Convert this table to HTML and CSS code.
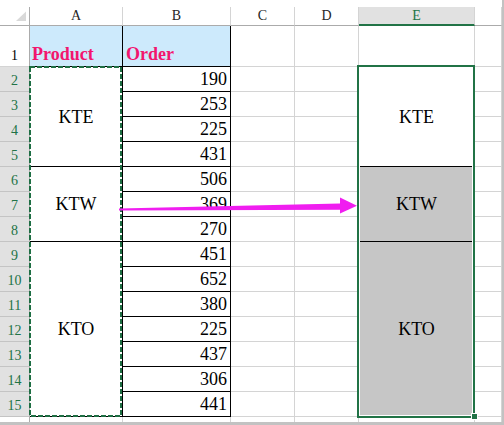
FILE: index.html
```html
<!DOCTYPE html>
<html>
<head>
<meta charset="utf-8">
<link rel="stylesheet" href="styles.css">
</head>
<body>
<div class="sheet">
  <div class="topgap"></div>
  <div class="vbar"></div>
  <div class="hbar"></div>

  <div class="corner"><svg class="corner-tri" width="29" height="18" viewBox="0 0 29 18"><polygon points="16,14 26,14 26,4.5" fill="#d9d9d9"/></svg></div>
  <div class="ch">A</div>
  <div class="ch">B</div>
  <div class="ch">C</div>
  <div class="ch">D</div>
  <div class="ch sel">E</div>
  <div class="ch"></div>

  <div class="rh plain">1</div>
  <div class="c title bk">Product</div>
  <div class="c title bk pad3">Order</div>
  <div class="c"></div><div class="c"></div><div class="c"></div><div class="c"></div>

  <div class="rh">2</div>
  <div class="c mid bk span4">KTE</div>
  <div class="c num bk">190</div>
  <div class="c"></div><div class="c"></div>
  <div class="c mid bkb span4">KTE</div>
  <div class="c"></div>

  <div class="rh">3</div>
  <div class="c num bk">253</div>
  <div class="c"></div><div class="c"></div><div class="c"></div>

  <div class="rh">4</div>
  <div class="c num bk">225</div>
  <div class="c"></div><div class="c"></div><div class="c"></div>

  <div class="rh">5</div>
  <div class="c num bk">431</div>
  <div class="c"></div><div class="c"></div><div class="c"></div>

  <div class="rh">6</div>
  <div class="c mid bk span3">KTW</div>
  <div class="c num bk">506</div>
  <div class="c"></div><div class="c"></div>
  <div class="c mid bkb hl span3">KTW</div>
  <div class="c"></div>

  <div class="rh">7</div>
  <div class="c num bk">369</div>
  <div class="c"></div><div class="c"></div><div class="c"></div>

  <div class="rh">8</div>
  <div class="c num bk">270</div>
  <div class="c"></div><div class="c"></div><div class="c"></div>

  <div class="rh">9</div>
  <div class="c mid bk span7">KTO</div>
  <div class="c num bk">451</div>
  <div class="c"></div><div class="c"></div>
  <div class="c mid hl span7">KTO</div>
  <div class="c"></div>

  <div class="rh">10</div>
  <div class="c num bk">652</div>
  <div class="c"></div><div class="c"></div><div class="c"></div>

  <div class="rh">11</div>
  <div class="c num bk">380</div>
  <div class="c"></div><div class="c"></div><div class="c"></div>

  <div class="rh">12</div>
  <div class="c num bk">225</div>
  <div class="c"></div><div class="c"></div><div class="c"></div>

  <div class="rh">13</div>
  <div class="c num bk">437</div>
  <div class="c"></div><div class="c"></div><div class="c"></div>

  <div class="rh">14</div>
  <div class="c num bk">306</div>
  <div class="c"></div><div class="c"></div><div class="c"></div>

  <div class="rh">15</div>
  <div class="c num bk">441</div>
  <div class="c"></div><div class="c"></div><div class="c"></div>

  <div class="rh plain last"></div>
  <div class="c last"></div><div class="c last"></div><div class="c last"></div><div class="c last"></div><div class="c last"></div><div class="c last"></div>

  <svg class="overlay" width="504" height="425" viewBox="0 0 504 425">
    <rect x="30" y="67" width="91" height="349" fill="none" stroke="#1e6e43" stroke-width="2" stroke-dasharray="5 2" shape-rendering="crispEdges"/>
    <polygon points="119,208.4 340,203.5 340,197.6 357,205.7 340,213.6 340,209.8 119,210.6" fill="#f01ef0"/>
  </svg>
  <div class="selbox"></div>
  <div class="handle"></div>
</div>
</body>
</html>
```
FILE: styles.css
```css
html, body {
  margin: 0;
  padding: 0;
  background: #fff;
}

.sheet {
  position: relative;
  width: 504px;
  height: 425px;
  overflow: hidden;
  display: grid;
  grid-template-columns: 30px 93px 108px 64px 64px 116px 27px 2px;
  grid-template-rows: 7px 19px 41px repeat(14, 25px) 5px 3px;
  font-family: "Liberation Serif", "DejaVu Serif", serif;
  background: #fff;
}

.sheet > div {
  box-sizing: border-box;
  min-width: 0;
  min-height: 0;
}

.topgap {
  grid-column: 1 / span 7;
  background: #fff;
}

.vbar {
  grid-column: 8;
  grid-row: 1 / 19;
  background: #c2c2c2;
}

.hbar {
  grid-column: 1 / -1;
  grid-row: 19;
  background: #c2c2c2;
}

.corner {
  border-right: 1px solid #ababab;
  border-bottom: 1px solid #ababab;
  background: #fff;
}

.corner-tri {
  display: block;
}

.ch {
  border-right: 1px solid #d4d4d4;
  border-bottom: 1px solid #ababab;
  background: #fff;
  color: #262626;
  font-family: "Liberation Serif", "DejaVu Serif", serif;
  font-size: 14px;
  line-height: 18px;
  text-align: center;
}

.ch.sel {
  background: #e1e1e1;
  color: #217346;
  border-bottom: 2px solid #217346;
  line-height: 17px;
}

.rh {
  display: flex;
  justify-content: center;
  align-items: flex-end;
  padding-bottom: 2px;
  background: #e1e1e1;
  color: #217346;
  font-family: "Liberation Serif", "DejaVu Serif", serif;
  font-size: 14px;
  line-height: 16px;
  border-right: 1px solid #ababab;
  border-bottom: 1px solid #c4c4c4;
  overflow: hidden;
}

.rh.plain {
  background: #fff;
  color: #000;
  border-bottom-color: #d4d4d4;
}

.c {
  display: flex;
  border-right: 1px solid #d4d4d4;
  border-bottom: 1px solid #d4d4d4;
  font-family: "Liberation Serif", "DejaVu Serif", serif;
  font-size: 18px;
  line-height: 20px;
  color: #000;
  overflow: hidden;
  white-space: nowrap;
}

.c.last,
.rh.last {
  border-bottom: none;
}

.num {
  justify-content: flex-end;
  align-items: flex-end;
  padding: 0 3px 2px 0;
}

.mid {
  justify-content: center;
  align-items: center;
}

.bk {
  border-right-color: #000;
  border-bottom-color: #000;
}

.bkb {
  border-bottom-color: #000;
}

.hl {
  background: #c6c6c6;
}

.title {
  align-items: flex-end;
  padding: 0 0 2px 2px;
  background: #cdeafc;
  color: #f2166e;
  font-weight: bold;
}

.title.pad3 {
  padding-left: 3px;
}

.span3 { grid-row: span 3; }
.span4 { grid-row: span 4; }
.span7 { grid-row: span 7; }

.overlay {
  position: absolute;
  left: 0;
  top: 0;
  pointer-events: none;
}

.selbox {
  position: absolute;
  left: 357px;
  top: 65px;
  width: 118px;
  height: 353px;
  border: 2px solid #217346;
  box-shadow: inset 0 0 0 1px #fff;
  pointer-events: none;
}

.handle {
  position: absolute;
  left: 471px;
  top: 413px;
  width: 7px;
  height: 7px;
  background: #217346;
  border: 1px solid #fff;
}
```
